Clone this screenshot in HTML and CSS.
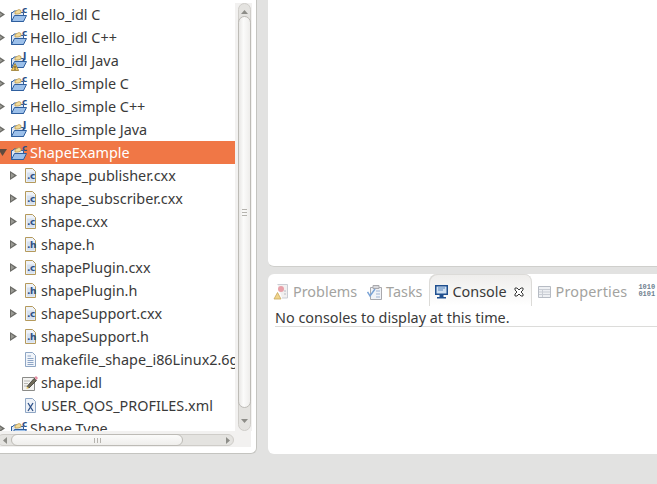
FILE: index.html
```html
<!DOCTYPE html>
<html lang="en">
<head>
<meta charset="utf-8">
<title>Eclipse</title>
<link rel="stylesheet" href="styles.css">
</head>
<body>
<svg class="defs" width="0" height="0" aria-hidden="true">
  <defs>
    <symbol id="tw" viewBox="0 0 7 9"><path d="M0 0L7 4.500L0 9Z" fill="#6b6b66"/><path d="M1 2L4.500 4.500L1 7Z" fill="#9a9a94"/></symbol>
    <symbol id="twd" viewBox="0 0 9 7"><path d="M0 0H9L4.500 7Z" fill="#5f4a3e"/></symbol>
    <symbol id="folder" viewBox="0 0 16 16">
      <path d="M.5 14.500V5.500H2L3 4H6L7 5.500H12.500V14.500Z" fill="#dfe9f6" stroke="#2f5f9e"/>
      <path d="M.5 14.500L3.500 8.500H15.500L12.500 14.500Z" fill="#9cc0ea" stroke="#2f5f9e"/>
      <path d="M4 4.500L8 2.500L10 3.500V6L7 7H4Z" fill="#f2dc9e" stroke="#b8923e" stroke-width=".7"/>
    </symbol>
    <symbol id="file" viewBox="0 0 11 15">
      <path d="M.5 .5H7.500L10.500 3.500V14.500H.5Z" fill="#eef2f8" stroke="#b59a5c"/>
      <path d="M2 4.500H9.500V13.500H2Z" fill="#d5e1f0"/>
    </symbol>
    <symbol id="plain" viewBox="0 0 11 15">
      <path d="M.5 .5H7.500L10.500 3.500V14.500H.5Z" fill="#f1f5fa" stroke="#8fa6c4"/>
      <path d="M2.500 4H6M2.500 6.500H8.500M2.500 8.500H8.500M2.500 10.500H8.500M2.500 12.500H8.500" stroke="#8ea5c6"/>
    </symbol>
    <symbol id="xmlf" viewBox="0 0 11 15">
      <path d="M.5 .5H7.500L10.500 3.500V14.500H.5Z" fill="#eef2f8" stroke="#8fa6c4"/>
      <path d="M3 5L8 13M8 5L3 13" stroke="#2d4f86" stroke-width="1.300"/>
    </symbol>
    <symbol id="idl" viewBox="0 0 16 16">
      <path d="M.5 2.500H12.500V15.500H.5Z" fill="#f3f3f1" stroke="#8b8b88"/>
      <path d="M2 6H8M2 8.500H6M2 11H5" stroke="#b9b9b5"/>
      <path d="M5 11.500L12 3.500L14.500 5.500L7 13Z" fill="#6f6a58" stroke="#3a3a34" stroke-width=".8"/>
      <path d="M12.500 2.500L14 1L16 3L14.500 5Z" fill="#e58aa0"/>
      <path d="M5 11.500L4.500 14L7 13Z" fill="#e8c45a"/>
    </symbol>
  </defs>
</svg>

<main class="workbench">
  <section class="explorer">
    <div class="explorer-main">
      <ul class="tree">
        <li class="row"><svg class="tw"><use href="#tw"/></svg><span class="pico"><svg class="fold"><use href="#folder"/></svg><svg class="nat" viewBox="0 0 8 8"><text x="2" y="7" class="nat-t">c</text></svg></span><span>Hello_idl C</span></li>
        <li class="row"><svg class="tw"><use href="#tw"/></svg><span class="pico"><svg class="fold"><use href="#folder"/></svg><svg class="nat" viewBox="0 0 8 8"><text x="2" y="7" class="nat-t">c</text></svg></span><span>Hello_idl C++</span></li>
        <li class="row"><svg class="tw"><use href="#tw"/></svg><span class="pico"><svg class="fold"><use href="#folder"/></svg><svg class="nat" viewBox="0 0 8 8"><text x="3" y="7" class="nat-t">J</text></svg><svg class="warn" viewBox="0 0 8 8"><path d="M4 .5L7.700 7.500H.3Z" fill="#f2c75c" stroke="#8a6a1e" stroke-width=".7"/><path d="M4 3V5.500M4 6.200V7" stroke="#222" stroke-width=".9"/></svg></span><span>Hello_idl Java</span></li>
        <li class="row"><svg class="tw"><use href="#tw"/></svg><span class="pico"><svg class="fold"><use href="#folder"/></svg><svg class="nat" viewBox="0 0 8 8"><text x="2" y="7" class="nat-t">c</text></svg></span><span>Hello_simple C</span></li>
        <li class="row"><svg class="tw"><use href="#tw"/></svg><span class="pico"><svg class="fold"><use href="#folder"/></svg><svg class="nat" viewBox="0 0 8 8"><text x="2" y="7" class="nat-t">c</text></svg></span><span>Hello_simple C++</span></li>
        <li class="row"><svg class="tw"><use href="#tw"/></svg><span class="pico"><svg class="fold"><use href="#folder"/></svg><svg class="nat" viewBox="0 0 8 8"><text x="3" y="7" class="nat-t">J</text></svg></span><span>Hello_simple Java</span></li>
        <li class="row selected"><svg class="twd"><use href="#twd"/></svg><span class="pico"><svg class="fold"><use href="#folder"/></svg><svg class="nat nat-sel" viewBox="0 0 8 8"><text x="2" y="7" class="nat-t">c</text></svg></span><span>ShapeExample</span></li>
        <li class="row child"><svg class="tw"><use href="#tw"/></svg><span class="fico"><svg class="docsvg"><use href="#file"/></svg><b class="letter">.c</b></span><span>shape_publisher.cxx</span></li>
        <li class="row child"><svg class="tw"><use href="#tw"/></svg><span class="fico"><svg class="docsvg"><use href="#file"/></svg><b class="letter">.c</b></span><span>shape_subscriber.cxx</span></li>
        <li class="row child"><svg class="tw"><use href="#tw"/></svg><span class="fico"><svg class="docsvg"><use href="#file"/></svg><b class="letter">.c</b></span><span>shape.cxx</span></li>
        <li class="row child"><svg class="tw"><use href="#tw"/></svg><span class="fico"><svg class="docsvg"><use href="#file"/></svg><b class="letter">.h</b></span><span>shape.h</span></li>
        <li class="row child"><svg class="tw"><use href="#tw"/></svg><span class="fico"><svg class="docsvg"><use href="#file"/></svg><b class="letter">.c</b></span><span>shapePlugin.cxx</span></li>
        <li class="row child"><svg class="tw"><use href="#tw"/></svg><span class="fico"><svg class="docsvg"><use href="#file"/></svg><b class="letter">.h</b></span><span>shapePlugin.h</span></li>
        <li class="row child"><svg class="tw"><use href="#tw"/></svg><span class="fico"><svg class="docsvg"><use href="#file"/></svg><b class="letter">.c</b></span><span>shapeSupport.cxx</span></li>
        <li class="row child"><svg class="tw"><use href="#tw"/></svg><span class="fico"><svg class="docsvg"><use href="#file"/></svg><b class="letter">.h</b></span><span>shapeSupport.h</span></li>
        <li class="row child leaf"><span class="fico"><svg class="docsvg"><use href="#plain"/></svg></span><span>makefile_shape_i86Linux2.6gcc4.1.1</span></li>
        <li class="row child leaf"><span class="fico wide"><svg class="idlsvg"><use href="#idl"/></svg></span><span>shape.idl</span></li>
        <li class="row child leaf"><span class="fico"><svg class="docsvg"><use href="#xmlf"/></svg></span><span>USER_QOS_PROFILES.xml</span></li>
        <li class="row"><svg class="tw"><use href="#tw"/></svg><span class="pico"><svg class="fold"><use href="#folder"/></svg><svg class="nat" viewBox="0 0 8 8"><text x="2" y="7" class="nat-t">c</text></svg></span><span>Shape Type</span></li>
      </ul>
      <div class="vbar">
        <div class="vtrack">
          <svg class="va" viewBox="0 0 7 4"><path d="M3.500 0L7 4H0Z"/></svg>
          <div class="vthumb"><i class="grip"></i></div>
          <svg class="va" viewBox="0 0 7 4"><path d="M0 0H7L3.500 4Z"/></svg>
        </div>
      </div>
    </div>
    <div class="hbar">
      <div class="htrack">
        <svg class="ha" viewBox="0 0 4 7"><path d="M4 0V7L0 3.500Z"/></svg>
        <div class="hthumb"><i class="hgrip"></i></div>
        <svg class="ha ha-r" viewBox="0 0 4 7"><path d="M0 0V7L4 3.500Z"/></svg>
      </div>
    </div>
  </section>

  <div class="right">
    <section class="editor"></section>
    <section class="views">
      <div class="tabs">
        <div class="tab t-problems">
          <svg class="ti" viewBox="0 0 16 16"><path d="M4.500 .5H14.500V14H9" fill="#f2f0f0" stroke="#c9cdd4"/><circle cx="8" cy="5" r="3" fill="#e8a0a8"/><path d="M4.500 8.500L8 15H1Z" fill="#f0d48c" stroke="#c9a85e" stroke-width=".8"/><path d="M11 7H13M11 10H13" stroke="#b8bcc4"/></svg>
          <span>Problems</span>
        </div>
        <div class="tab t-tasks">
          <svg class="ti" viewBox="0 0 16 16"><path d="M3.500 3.500H14.500V15.500H3.500Z" fill="#f1f3f7" stroke="#a9a9ad"/><path d="M6 1.500H12V4.500H6Z" fill="#d9d9dc" stroke="#a9a9ad"/><path d="M9 7H13M9 10H13M9 13H13" stroke="#9fb3d3"/><path d="M.5 8L3 12L8 5" fill="none" stroke="#7aa3d6" stroke-width="1.500"/></svg>
          <span>Tasks</span>
        </div>
        <div class="tab active">
          <svg class="ti ti-c" viewBox="0 0 15 15"><path d="M1 1H14V11H1Z" fill="#1f4f8f"/><path d="M2.500 2.500H12.500V9.500H2.500Z" fill="#cfe0f2"/><path d="M4 4H11M4 6H9" stroke="#5a86bb"/><path d="M5.500 11H9.500V13H12V14.500H3V13H5.500Z" fill="#1f4f8f"/></svg>
          <span>Console</span>
          <svg class="close" viewBox="0 0 10 10"><path d="M1 1H3L5 3L7 1H9V3L7 5L9 7V9H7L5 7L3 9H1V7L3 5L1 3Z" fill="#fff" stroke="#3a3a3a"/></svg>
        </div>
        <div class="tab t-props">
          <svg class="ti ti-p" viewBox="0 0 13 12"><path d="M.5 .5H12.500V11.500H.5Z" fill="#eef0f3" stroke="#b7bcc4"/><path d="M1 3.500H12M1 6H12M1 8.500H12M4.500 3.500V11" stroke="#c9cdd4"/></svg>
          <span class="props-label">Properties</span>
        </div>
        <div class="binary"><span>1010</span><span>0101</span></div>
      </div>
      <p class="message">No consoles to display at this time.</p>
    </section>
  </div>
</main>
</body>
</html>
```

FILE: styles.css
```css
* { box-sizing: border-box; }
html, body { margin: 0; height: 100%; }
body {
  width: 657px;
  height: 484px;
  overflow: hidden;
  background: #e2e2e1;
  font-family: "Noto Sans", "Open Sans", sans-serif;
  font-size: 14.4px;
  color: #3a3a3a;
}
.defs { display: block; height: 0; }
.workbench { display: flex; align-items: flex-start; gap: 11px; height: 484px; }

/* explorer */
.explorer {
  width: 257px;
  height: 454px;
  flex: none;
  background: #fff;
  border-right: 1px solid #c4c4c0;
  border-bottom: 1px solid #c4c4c0;
  border-bottom-right-radius: 6px;
  padding: 0 5px 6px 0;
  display: flex;
  flex-direction: column;
}
.explorer-main { height: 431px; display: flex; }
.tree {
  list-style: none;
  margin: 0;
  padding: 3px 0 0;
  width: 235px;
  height: 431px;
  overflow: hidden;
  flex: none;
}
.row {
  height: 23px;
  display: flex;
  align-items: center;
  white-space: nowrap;
  padding-left: 0;
}
.row.selected { background: #f07746; color: #fff; }
.tw { width: 7px; height: 9px; margin-left: -2px; flex: none; }
.twd { width: 9px; height: 7px; margin-left: -2px; flex: none; }
.pico { position: relative; width: 16px; height: 16px; margin-left: 6px; margin-right: 3px; flex: none; display: block; }
.selected .pico { margin-left: 4px; }
.fold { position: absolute; left: 0; top: 0; width: 16px; height: 16px; }
.nat { position: absolute; right: -1px; top: -1px; width: 8px; height: 8px; overflow: visible; }
.nat-t { font: bold 9px "DejaVu Sans", sans-serif; fill: #2d4f86; }
.warn { position: absolute; left: 0; bottom: -2px; width: 8px; height: 8px; }
.child .tw { margin-left: 10px; }
.child .fico { margin-left: 8px; }
.child.leaf { padding-left: 25px; }
.child.leaf .fico { margin-left: 0; }
.child.leaf .fico.wide { margin-left: -3px; width: 16px; margin-right: 3px; }
.fico { position: relative; width: 11px; height: 15px; margin-right: 5px; flex: none; display: block; }
.docsvg { position: absolute; left: 0; top: 0; width: 11px; height: 15px; }
.idlsvg { position: absolute; left: 0; top: 0; width: 16px; height: 16px; }
.letter { position: absolute; left: 2px; bottom: 2px; font: bold 9px/10px "DejaVu Sans", sans-serif; color: #2d4f86; letter-spacing: -.5px; }

/* scrollbars */
.vbar { width: 17px; height: 428px; margin-top: 3px; background: #f2f1f0; padding: 0 1px 0 3px; }
.vtrack {
  height: 100%;
  border: 1px solid #cfcdc9;
  border-radius: 7px;
  background: #e4e3e0;
  display: flex;
  flex-direction: column;
  align-items: center;
  padding-top: 6px;
  padding-bottom: 5px;
}
.va { width: 7px; height: 4px; flex: none; fill: #8d8d88; }
.vthumb {
  flex: none;
  width: 13px;
  height: 392px;
  margin: 2px 0 11px;
  border: 1px solid #bdbbb6;
  border-radius: 7px;
  background: linear-gradient(90deg, #e8e7e5, #fbfbfa 40%, #eeedeb);
  display: flex;
  align-items: center;
  justify-content: center;
}
.grip { display: block; width: 5px; height: 7px; background: repeating-linear-gradient(180deg, #b5b3ae 0 1px, transparent 1px 3px); }
.hbar { height: 16px; width: 251px; background: #f2f1f0; padding: 3px 17px 1px 0; }
.htrack {
  height: 12px;
  margin-left: -3px;
  border: 1px solid #cfcdc9;
  border-radius: 7px;
  background: #e4e3e0;
  display: flex;
  align-items: center;
  padding: 0 3px 0 5px;
}
.ha { width: 4px; height: 7px; flex: none; fill: #8d8d88; }
.ha-r { margin-left: auto; }
.hthumb {
  width: 172px;
  height: 12px;
  margin-left: 4px;
  border: 1px solid #bdbbb6;
  border-radius: 7px;
  background: linear-gradient(180deg, #fbfbfa, #efeeec);
  display: flex;
  align-items: center;
  justify-content: center;
}
.hgrip { display: block; width: 7px; height: 5px; background: repeating-linear-gradient(90deg, #b5b3ae 0 1px, transparent 1px 3px); }

/* right */
.right { flex: 1; display: flex; flex-direction: column; gap: 7px; height: 454px; }
.editor {
  height: 267px;
  background: #fff;
  border-bottom: 1px solid #cfcfcc;
  border-bottom-left-radius: 6px;
}
.views {
  flex: 1;
  background: #fff;
  border-top-left-radius: 6px;
  border-bottom-left-radius: 6px;
  overflow: hidden;
}
.tabs {
  height: 32px;
  display: flex;
  align-items: center;
  color: #a3a3a0;
  padding-left: 5px;
  white-space: nowrap;
}
.tab { display: flex; align-items: center; height: 100%; padding-top: 3px; }
.ti { width: 16px; height: 16px; flex: none; margin-right: 4px; }
.t-tasks { margin-left: 10px; }
.t-tasks .ti { margin-right: 3px; }
.active {
  margin-left: 6px;
  width: 103px;
  padding-left: 5px;
  color: #3a3a3a;
  background: linear-gradient(180deg, #eeedeb, #fff);
  border-radius: 8px 8px 0 0;
  box-shadow: inset 1px 1px 0 #dcdbd8, inset -1px 0 0 #dcdbd8;
}
.ti-c { width: 15px; height: 15px; margin-right: 4px; }
.close { width: 10px; height: 10px; margin-left: 7px; flex: none; }
.t-props { margin-left: 6px; }
.ti-p { width: 13px; height: 12px; margin-right: 5px; }
.props-label { letter-spacing: .2px; }
.binary {
  margin-left: 11px;
  padding-top: 2px;
  display: flex;
  flex-direction: column;
  font: bold 7px/7px "Liberation Mono", monospace;
  color: #6f7f8f;
}
.message {
  margin: 0;
  height: 21px;
  line-height: 23px;
  position: relative;
  border-bottom: 1px solid #dcdcda;
  margin-left: 7px;
}
```
